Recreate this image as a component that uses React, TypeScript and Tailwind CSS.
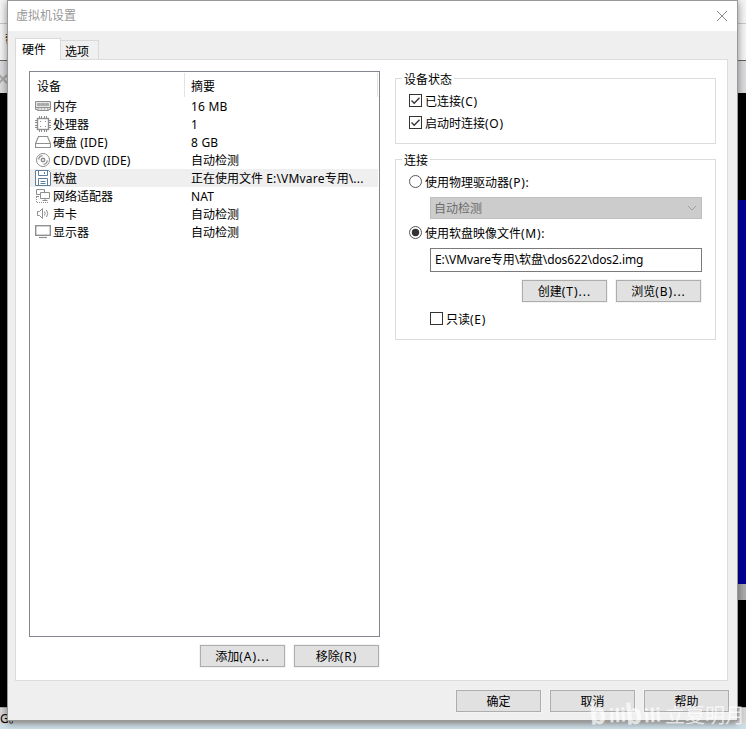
import React, { useState } from 'react'
import clsx from 'clsx'

interface Device {
  id: string
  name: string
  summary: string
  icon: React.ReactNode
}

const devices: Device[] = [
  {
    id: 'memory',
    name: '内存',
    summary: '16 MB',
    icon: (
      <>
        <path d="M0.5 3.5h15v8h-2v1h-11v-1h-2z" fill="#e4e4e4" />
        <path d="M2.5 5.5h3v2h-3zM6.5 5.5h3v2h-3zM10.5 5.5h3v2h-3z" fill="#aaa" stroke="#aaa" />
        <path d="M1 9.5h14M3.5 11.5v-1M6.5 11.5v-1M9.5 11.5v-1M12.5 11.5v-1" />
      </>
    ),
  },
  {
    id: 'cpu',
    name: '处理器',
    summary: '1',
    icon: (
      <>
        <rect x="2.5" y="2.5" width="11" height="11" fill="#fff" strokeWidth="1.4" />
        <path d="M4.5 0v2M6.5 0v2M9.5 0v2M11.5 0v2M4.5 14v2M6.5 14v2M9.5 14v2M11.5 14v2M0 4.5h2M0 6.5h2M0 9.5h2M0 11.5h2M14 4.5h2M14 6.5h2M14 9.5h2M14 11.5h2" />
        <path d="M5 5.5h1M10 5.5h1M5 10.5h1M10 10.5h1" />
      </>
    ),
  },
  {
    id: 'disk',
    name: '硬盘 (IDE)',
    summary: '8 GB',
    icon: (
      <>
        <path d="M3.5 2.5h9l3 7v4h-15v-4z" fill="#fff" strokeWidth="1.2" />
        <path d="M0.5 9.5h15" />
      </>
    ),
  },
  {
    id: 'cd',
    name: 'CD/DVD (IDE)',
    summary: '自动检测',
    icon: (
      <>
        <circle cx="8" cy="8" r="6.5" fill="#fff" />
        <circle cx="8" cy="8" r="1.7" strokeWidth="1.5" />
        <path d="M3.7 7.5A4.3 4.3 0 0 1 7.5 3.7M12.3 8.5a4.3 4.3 0 0 1-3.8 3.8" strokeWidth="1.3" />
      </>
    ),
  },
  {
    id: 'floppy',
    name: '软盘',
    summary: '正在使用文件 E:\\VMvare专用\\...',
    icon: (
      <g stroke="#5e7f9b">
        <path d="M0.5 0.5h13l2 2v13h-15z" fill="#fff" />
        <path d="M3.5 0.5v5h9v-5M9.5 2v2M3.5 15.5v-7h9v7M5.5 11.5h5M5.5 13.5h5" />
      </g>
    ),
  },
  {
    id: 'network',
    name: '网络适配器',
    summary: 'NAT',
    icon: (
      <>
        <path d="M1.5 1.5h8v5h-8z" fill="#fff" />
        <path d="M5.5 4.5h9v6h-9z" fill="#fff" />
        <path d="M4 8.5h-3M10 10.5v2M7.5 12.5h5" />
        <path d="M1.5 9v5.5h12" strokeDasharray="1 1" />
      </>
    ),
  },
  {
    id: 'sound',
    name: '声卡',
    summary: '自动检测',
    icon: (
      <>
        <path d="M2.5 5.5h2l3-3v10l-3-3h-2z" />
        <path d="M9.5 5.5q1.2 2 0 4M11.5 4q2.4 3.5 0 7" />
      </>
    ),
  },
  {
    id: 'display',
    name: '显示器',
    summary: '自动检测',
    icon: (
      <>
        <rect x="0.7" y="1.7" width="14.6" height="9.6" fill="#fff" strokeWidth="1.4" />
        <path d="M4 13.5h8" strokeWidth="1.2" />
      </>
    ),
  },
]

// latin runs are set a little wider than the chinese around them
function Label({ text, tracking }: { text: string; tracking: string }) {
  return text.split(/([\x21-\x7e][\x20-\x7e]*)/).map((part, i) =>
    i % 2 ? (
      <span key={i} className={tracking}>
        {part}
      </span>
    ) : (
      part
    ),
  )
}

function Button({ label }: { label: string }) {
  return (
    <button className="flex h-[22px] w-[85px] items-center justify-center border border-[#adadad] bg-[#e1e1e1] pt-[2px] leading-none outline outline-[#f3f3f3]">
      <span>
        <Label text={label} tracking="tracking-[1px]" />
      </span>
    </button>
  )
}

function Checkbox({ label, checked }: { label: string; checked?: boolean }) {
  const [on, setOn] = useState(!!checked)
  return (
    <button className="flex h-[13px] items-center gap-[3px]" onClick={() => setOn(!on)}>
      <svg width="13" height="13" viewBox="0 0 13 13" fill="none" stroke="#333">
        <rect x="0.5" y="0.5" width="12" height="12" fill="#fff" />
        {on && <path d="M2.5 6.5l2.7 2.8 5.3-5.6" strokeWidth="1.3" />}
      </svg>
      <span className="pt-[2px] leading-[13px]">
        <Label text={label} tracking="tracking-[0.7px]" />
      </span>
    </button>
  )
}

function Radio({ label, checked, onClick }: { label: string; checked: boolean; onClick: () => void }) {
  return (
    <button className="flex h-[13px] items-center gap-[3px]" onClick={onClick}>
      <svg width="13" height="13" viewBox="0 0 13 13" fill="none">
        <circle cx="6.5" cy="6.5" r="6" fill="#fff" stroke="#555" />
        {checked && <circle cx="6.5" cy="6.5" r="3.7" fill="#333" />}
      </svg>
      <span className="pt-[2px] leading-[13px]">
        <Label text={label} tracking="tracking-[0.7px]" />
      </span>
    </button>
  )
}

function Group({ title, className, children }: { title: string; className: string; children: React.ReactNode }) {
  return (
    <section className={clsx('flex w-[321px] flex-col border border-[#dcdcdc]', className)}>
      <h2 className="-mt-[6px] ml-[6px] h-[13px] self-start bg-white px-[2px] leading-[13px]">{title}</h2>
      {children}
    </section>
  )
}

// what is still visible of the window behind the dialog
function Desktop() {
  return (
    <div className="flex h-full w-full flex-col bg-[#dcdcdf]">
      <div className="h-[23px] bg-[#f5f5f5]" />
      <div className="h-[37px] border-t border-[#c8c8c8] bg-[#f5f5f5] pt-[8px] pl-[5px] leading-4">帮</div>
      <div className="h-[33px] border-t border-[#666] pt-[13px]">
        <svg width="8" height="11" viewBox="0 0 8 11" fill="none" stroke="#aaa" strokeWidth="2">
          <path d="M-1 1l8 8M-1 9l8-8" />
        </svg>
      </div>
      <div className="flex h-[614px] justify-end bg-black">
        <div className="flex w-[9px] flex-col pt-[107px]">
          <div className="h-[384px] bg-[#00009c]" />
          <div className="h-4 bg-[#aaa]" />
        </div>
      </div>
      <div className="h-[17px] border-t border-[#aaa] bg-[#d8d8d8] pt-[3px] leading-4">G。</div>
      <div className="h-[5px] bg-[#cfe0ea]" />
    </div>
  )
}

function DeviceList() {
  const [selected, setSelected] = useState('floppy')
  return (
    <div className="h-[566px] w-[351px] border border-[#828790] bg-white pt-px">
      <div className="flex h-6 leading-6">
        <div className="w-[155px] border-r border-[#e3e3e3] pt-[2px] pl-[7px]">设备</div>
        <div className="w-[193px] border-r border-[#e3e3e3] pt-[2px] pl-[6px]">摘要</div>
      </div>
      {devices.map((device) => (
        <div
          key={device.id}
          onClick={() => setSelected(device.id)}
          className={clsx('mr-px flex h-[18px] items-center leading-[18px]', selected === device.id && 'bg-[#efefef]')}
        >
          <svg className="ml-[5px]" width="16" height="16" viewBox="0 0 16 16" fill="none" stroke="#8f8f8f">
            {device.icon}
          </svg>
          <span className="w-[138px] pt-[2px] pl-[2px]">
            <Label text={device.name} tracking="tracking-[0.2px]" />
          </span>
          <span className="pt-[2px] pl-[2px] whitespace-pre">
            <Label text={device.summary} tracking="tracking-[0.2px]" />
          </span>
        </div>
      ))}
    </div>
  )
}

function ConnectionSettings() {
  const [source, setSource] = useState('image')
  return (
    <div className="flex flex-col gap-[15px] pt-[7px]">
      <Group title="设备状态" className="h-[66px]">
        <div className="flex flex-col gap-[9px] pt-[8px] pl-[13px]">
          <Checkbox label="已连接(C)" checked />
          <Checkbox label="启动时连接(O)" checked />
        </div>
      </Group>
      <Group title="连接" className="h-[181px]">
        <div className="flex flex-col pt-[8px] pl-[13px]">
          <Radio label="使用物理驱动器(P):" checked={source === 'physical'} onClick={() => setSource('physical')} />
          <div className="mt-[9px] ml-[21px] flex h-[22px] w-[272px] items-center justify-between border border-[#bfbfbf] bg-[#ccc] pr-1 pl-[3px] text-[#6d6d6d]">
            <span className="pt-[2px]">自动检测</span>
            <svg width="10" height="6" viewBox="0 0 10 6" fill="none" stroke="#a0a0a0">
              <path d="M1 1l4 4 4-4" />
            </svg>
          </div>
          <div className="mt-[7px]">
            <Radio label="使用软盘映像文件(M):" checked={source === 'image'} onClick={() => setSource('image')} />
          </div>
          <input
            className="mt-[9px] ml-[21px] h-6 w-[272px] border border-[#7a7a7a] bg-white px-[4px] pb-[2px] tracking-[-0.1px] outline-none"
            defaultValue={'E:\\VMvare专用\\软盘\\dos622\\dos2.img'}
          />
          <div className="mt-2 ml-[113px] flex gap-[9px]">
            <Button label="创建(T)..." />
            <Button label="浏览(B)..." />
          </div>
          <div className="mt-[10px] ml-[21px]">
            <Checkbox label="只读(E)" />
          </div>
        </div>
      </Group>
    </div>
  )
}

function Watermark() {
  return (
    <div className="flex h-[32px] w-[155px] items-end whitespace-nowrap text-white/70">
      <div className="flex w-[74px] items-end font-bold">
        <span className="w-[18px] origin-bottom-left scale-x-90 -rotate-6 text-[29px] leading-[30px]">b</span>
        <span className="w-[18px] -rotate-3 text-[19px] leading-[27px]">ili</span>
        <span className="w-[17px] origin-bottom-left scale-x-90 -rotate-6 text-[29px] leading-[30px]">b</span>
        <span className="-rotate-3 text-[19px] leading-[27px]">ili</span>
      </div>
      <span className="text-[20px] leading-[27px]">立夏明月</span>
    </div>
  )
}

export default function App() {
  return (
    <div className="relative h-[729px] w-[746px] overflow-hidden font-['Noto_Sans','Noto_Sans_CJK_SC',sans-serif] text-[12px] text-black">
      <Desktop />
      <div className="absolute top-0 left-[7px] flex h-[721px] w-[731px] flex-col border border-[#999] bg-[#efefef] shadow-[0_2px_8px_rgba(0,0,0,0.45)]">
        <header className="flex h-[30px] items-center justify-between bg-white pr-[9px] pl-2 text-[#999]">
          虚拟机设置
          <svg width="12" height="12" viewBox="0 0 12 12" stroke="#888">
            <path d="M1 1l10 10M11 1L1 11" />
          </svg>
        </header>
        <div className="flex h-[28px] items-end pl-[7px] leading-none">
          <div className="z-10 -mb-px flex h-[22px] w-[46px] items-center border border-b-0 border-[#d9d9d9] bg-white pt-px pl-[6px]">硬件</div>
          <div className="flex h-[19px] w-[38px] items-center border border-b-0 border-l-0 border-[#d9d9d9] bg-[#f0f0f0] pt-[3px] pl-1">选项</div>
        </div>
        <main className="ml-[7px] flex h-[622px] w-[713px] gap-[15px] border border-[#dcdcdc] bg-white pt-[11px] pl-[13px]">
          <div className="flex flex-col">
            <DeviceList />
            <div className="mt-2 flex justify-end gap-[9px] pr-px">
              <Button label="添加(A)..." />
              <Button label="移除(R)" />
            </div>
          </div>
          <ConnectionSettings />
        </main>
        <footer className="flex justify-end gap-[9px] pt-[9px] pr-2">
          <Button label="确定" />
          <Button label="取消" />
          <Button label="帮助" />
        </footer>
      </div>
      <div className="absolute right-0 bottom-0">
        <Watermark />
      </div>
    </div>
  )
}
